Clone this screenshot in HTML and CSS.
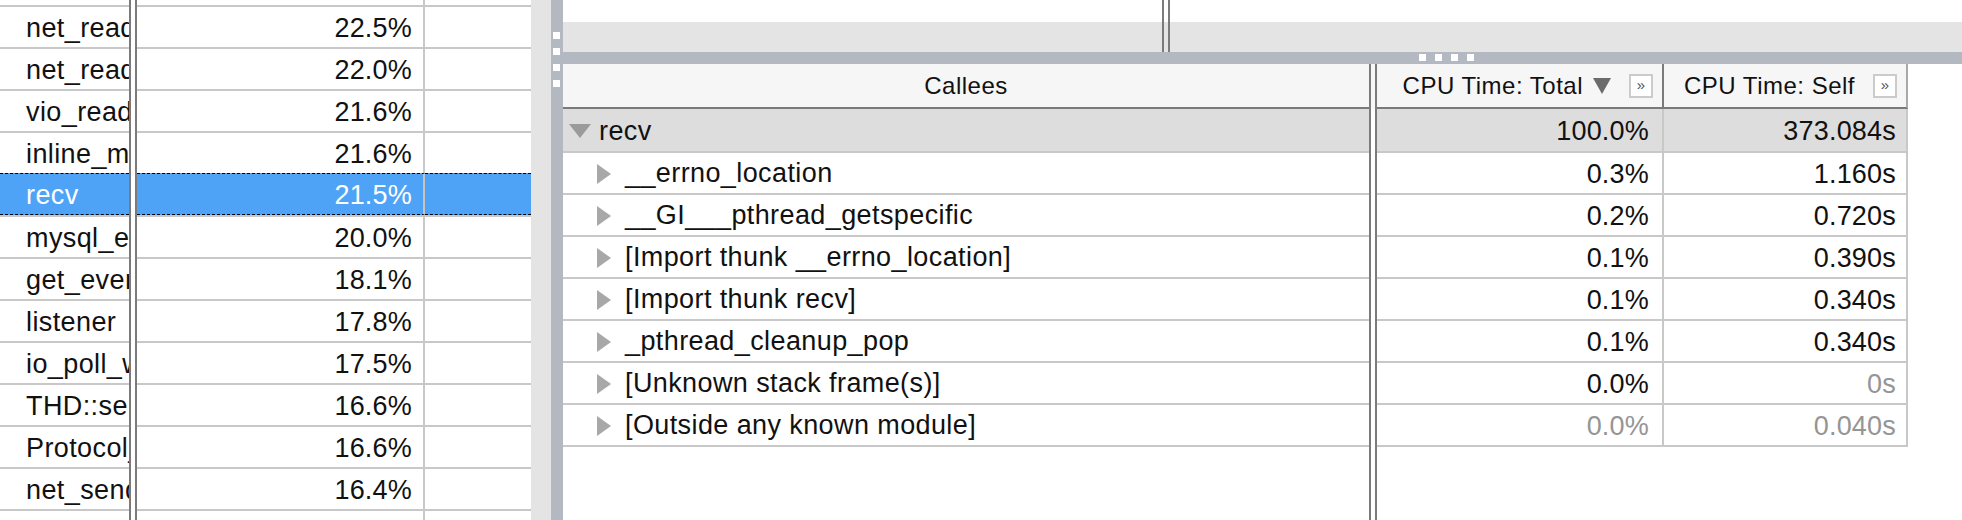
FILE: index.html
```html
<!DOCTYPE html>
<html>
<head>
<meta charset="utf-8">
<link rel="stylesheet" href="styles.css">
</head>
<body>
<div class="app">
  <section class="left">
    <div class="lrow top"><div class="c-name"></div><div class="c-dbl"></div><div class="c-pct"></div><div class="c-rest"></div></div>
    <div class="lrow"><div class="c-name">net_read_raw_loop</div><div class="c-dbl"></div><div class="c-pct">22.5%</div><div class="c-rest"></div></div>
    <div class="lrow"><div class="c-name">net_read_packet</div><div class="c-dbl"></div><div class="c-pct">22.0%</div><div class="c-rest"></div></div>
    <div class="lrow"><div class="c-name">vio_read</div><div class="c-dbl"></div><div class="c-pct">21.6%</div><div class="c-rest"></div></div>
    <div class="lrow"><div class="c-name">inline_mysql_socket_recv</div><div class="c-dbl"></div><div class="c-pct">21.6%</div><div class="c-rest"></div></div>
    <div class="lrow sel"><div class="c-name">recv</div><div class="c-dbl"></div><div class="c-pct">21.5%</div><div class="c-rest"></div></div>
    <div class="lrow"><div class="c-name">mysql_execute_command</div><div class="c-dbl"></div><div class="c-pct">20.0%</div><div class="c-rest"></div></div>
    <div class="lrow"><div class="c-name">get_event</div><div class="c-dbl"></div><div class="c-pct">18.1%</div><div class="c-rest"></div></div>
    <div class="lrow"><div class="c-name">listener</div><div class="c-dbl"></div><div class="c-pct">17.8%</div><div class="c-rest"></div></div>
    <div class="lrow"><div class="c-name">io_poll_wait</div><div class="c-dbl"></div><div class="c-pct">17.5%</div><div class="c-rest"></div></div>
    <div class="lrow"><div class="c-name">THD::send_result</div><div class="c-dbl"></div><div class="c-pct">16.6%</div><div class="c-rest"></div></div>
    <div class="lrow"><div class="c-name">Protocol_classic::read_packet</div><div class="c-dbl"></div><div class="c-pct">16.6%</div><div class="c-rest"></div></div>
    <div class="lrow"><div class="c-name">net_send_ok</div><div class="c-dbl"></div><div class="c-pct">16.4%</div><div class="c-rest"></div></div>
    <div class="lrow bottom"><div class="c-name"></div><div class="c-dbl"></div><div class="c-pct"></div><div class="c-rest"></div></div>
  </section>

  <div class="vtrack"></div>
  <div class="vsplit">
    <span class="grip"></span><span class="grip"></span><span class="grip"></span><span class="grip"></span>
  </div>

  <section class="right">
    <div class="upper"><div class="dbl-line"></div></div>
    <div class="hsplit">
      <span class="grip"></span><span class="grip"></span><span class="grip"></span><span class="grip"></span>
    </div>

    <div class="rrow head">
      <div class="r-name">Callees</div>
      <div class="c-dbl"></div>
      <div class="r-total">
        <span class="hlabel">CPU Time: Total</span>
        <svg class="sort" width="18" height="16" viewBox="0 0 18 16"><polygon points="0,0 18,0 9,16" fill="#6b6b6b"/></svg>
        <span class="more">»</span>
      </div>
      <div class="r-self">
        <span class="hlabel">CPU Time: Self</span>
        <span class="more">»</span>
      </div>
      <div class="r-rest"></div>
    </div>

    <div class="rrow root">
      <div class="r-name"><span class="tw"><svg width="22" height="14" viewBox="0 0 22 14"><polygon points="0,0 22,0 11,14" fill="#9b9b9b"/></svg></span>recv</div>
      <div class="c-dbl"></div>
      <div class="r-total">100.0%</div>
      <div class="r-self">373.084s</div>
      <div class="r-rest"></div>
    </div>

    <div class="rrow child">
      <div class="r-name"><span class="tw"><svg width="14" height="20" viewBox="0 0 14 20"><polygon points="0,0 14,10 0,20" fill="#a8a8a8"/></svg></span>__errno_location</div>
      <div class="c-dbl"></div>
      <div class="r-total">0.3%</div>
      <div class="r-self">1.160s</div>
      <div class="r-rest"></div>
    </div>
    <div class="rrow child">
      <div class="r-name"><span class="tw"><svg width="14" height="20" viewBox="0 0 14 20"><polygon points="0,0 14,10 0,20" fill="#a8a8a8"/></svg></span>__GI___pthread_getspecific</div>
      <div class="c-dbl"></div>
      <div class="r-total">0.2%</div>
      <div class="r-self">0.720s</div>
      <div class="r-rest"></div>
    </div>
    <div class="rrow child">
      <div class="r-name"><span class="tw"><svg width="14" height="20" viewBox="0 0 14 20"><polygon points="0,0 14,10 0,20" fill="#a8a8a8"/></svg></span>[Import thunk __errno_location]</div>
      <div class="c-dbl"></div>
      <div class="r-total">0.1%</div>
      <div class="r-self">0.390s</div>
      <div class="r-rest"></div>
    </div>
    <div class="rrow child">
      <div class="r-name"><span class="tw"><svg width="14" height="20" viewBox="0 0 14 20"><polygon points="0,0 14,10 0,20" fill="#a8a8a8"/></svg></span>[Import thunk recv]</div>
      <div class="c-dbl"></div>
      <div class="r-total">0.1%</div>
      <div class="r-self">0.340s</div>
      <div class="r-rest"></div>
    </div>
    <div class="rrow child">
      <div class="r-name"><span class="tw"><svg width="14" height="20" viewBox="0 0 14 20"><polygon points="0,0 14,10 0,20" fill="#a8a8a8"/></svg></span>_pthread_cleanup_pop</div>
      <div class="c-dbl"></div>
      <div class="r-total">0.1%</div>
      <div class="r-self">0.340s</div>
      <div class="r-rest"></div>
    </div>
    <div class="rrow child">
      <div class="r-name"><span class="tw"><svg width="14" height="20" viewBox="0 0 14 20"><polygon points="0,0 14,10 0,20" fill="#a8a8a8"/></svg></span>[Unknown stack frame(s)]</div>
      <div class="c-dbl"></div>
      <div class="r-total">0.0%</div>
      <div class="r-self dim">0s</div>
      <div class="r-rest"></div>
    </div>
    <div class="rrow child">
      <div class="r-name"><span class="tw"><svg width="14" height="20" viewBox="0 0 14 20"><polygon points="0,0 14,10 0,20" fill="#a8a8a8"/></svg></span>[Outside any known module]</div>
      <div class="c-dbl"></div>
      <div class="r-total dim">0.0%</div>
      <div class="r-self dim">0.040s</div>
      <div class="r-rest"></div>
    </div>
    <div class="rrow filler">
      <div class="f-name"></div>
      <div class="c-dbl"></div>
      <div class="r-rest"></div>
    </div>
  </section>
</div>
</body>
</html>
```

FILE: styles.css
```css
html, body {
  margin: 0;
  padding: 0;
  background: #fff;
}
body {
  font-family: "Liberation Sans", Arial, Helvetica, sans-serif;
  color: #111;
}
.app {
  display: flex;
  width: 1962px;
  height: 520px;
  overflow: hidden;
}

/* ---------- left pane ---------- */
.left {
  width: 531px;
  flex: none;
  display: flex;
  flex-direction: column;
  font-size: 27px;
  letter-spacing: 0.4px;
}
.lrow {
  display: flex;
  height: 42px;
  flex: none;
}
.lrow > div {
  box-sizing: border-box;
  line-height: 40px;
  padding-top: 1px;
}
.lrow > .c-name {
  width: 129px;
  flex: none;
  border-top: 2px solid #c8c8c8;
  padding-left: 26px;
  overflow: hidden;
  white-space: nowrap;
}
.c-dbl {
  width: 8px;
  flex: none;
  box-sizing: border-box;
  border-left: 2px solid #7b7b7b;
  border-right: 2px solid #7b7b7b;
  background: #fff;
}
.lrow > .c-pct {
  width: 288px;
  flex: none;
  border-top: 2px solid #c8c8c8;
  border-right: 2px solid #c8c8c8;
  padding-right: 11px;
  text-align: right;
  letter-spacing: 0.2px;
}
.lrow > .c-rest {
  flex: 1;
  border-top: 2px solid #c8c8c8;
}
.lrow.top {
  height: 5px;
}
.lrow.top > div {
  border-top: 0;
}
.lrow.bottom {
  flex: 1;
}
.lrow.sel > .c-name,
.lrow.sel > .c-pct,
.lrow.sel > .c-rest {
  background: #4fa3f7;
  color: #fff;
  border-top: 1px dashed #000;
  border-bottom: 1px dashed #000;
}
.lrow.sel > .c-pct {
  border-right-color: #c9c4bd;
}

/* ---------- splitter between panes ---------- */
.vtrack {
  width: 20px;
  flex: none;
  background: #e4e4e4;
}
.vsplit {
  width: 12px;
  flex: none;
  background: #b4b8c1;
  display: flex;
  flex-direction: column;
  gap: 9px;
  padding-top: 32px;
  box-sizing: border-box;
}
.grip {
  display: block;
  width: 7px;
  height: 7px;
  background: #fff;
  flex: none;
}
.vsplit .grip {
  margin-left: 2px;
}

/* ---------- right pane ---------- */
.right {
  flex: 1;
  display: flex;
  flex-direction: column;
  min-width: 0;
}
.upper {
  height: 52px;
  flex: none;
  background: linear-gradient(#fff 0 22px, #e4e4e4 22px 52px);
  padding-left: 599px;
  display: flex;
}
.dbl-line {
  width: 8px;
  box-sizing: border-box;
  border-left: 2px solid #7b7b7b;
  border-right: 2px solid #7b7b7b;
}
.hsplit {
  height: 12px;
  flex: none;
  background: #b4b8c1;
  display: flex;
  gap: 9px;
  padding: 2px 0 0 856px;
  box-sizing: border-box;
}

.rrow {
  display: flex;
  flex: none;
  font-size: 27px;
}
.rrow > div {
  box-sizing: border-box;
}
.r-name {
  width: 806px;
  flex: none;
  display: flex;
  align-items: center;
  white-space: nowrap;
  overflow: hidden;
  border-bottom: 2px solid #c8c8c8;
  letter-spacing: 0.4px;
}
.r-total {
  width: 287px;
  flex: none;
  border-bottom: 2px solid #c8c8c8;
  border-right: 2px solid #c8c8c8;
  text-align: right;
  padding-right: 13px;
  letter-spacing: 0.2px;
}
.r-self {
  width: 244px;
  flex: none;
  border-bottom: 2px solid #c8c8c8;
  border-right: 2px solid #c8c8c8;
  text-align: right;
  padding-right: 10px;
  letter-spacing: 0.2px;
}
.r-rest {
  flex: 1;
}
.dim {
  color: #959595;
}

/* header */
.rrow.head {
  height: 45px;
  font-size: 24px;
  letter-spacing: 0.5px;
}
.rrow.head > .r-name,
.rrow.head > .r-total,
.rrow.head > .r-self {
  background: #f6f6f6;
  border-bottom: 2px solid #7a7a7a;
  letter-spacing: 0.5px;
}
.rrow.head > .c-dbl {
  background: #f6f6f6;
}
.rrow.head > .r-name {
  justify-content: center;
  padding-top: 1px;
}
.rrow.head > .r-total,
.rrow.head > .r-self {
  display: flex;
  align-items: center;
  justify-content: flex-end;
  padding-right: 9px;
  padding-top: 1px;
}
.rrow.head > .r-total {
  border-right: 2px solid #7a7a7a;
}
.rrow.head > .r-self {
  border-right: 2px solid #a9a9a9;
}
.sort {
  display: block;
  margin-left: 10px;
  flex: none;
}
.more {
  width: 24px;
  height: 24px;
  box-sizing: border-box;
  border: 2px solid #cbcbcb;
  background: #fff;
  margin-left: 18px;
  font-size: 15px;
  line-height: 1;
  color: #555;
  text-align: center;
  padding-top: 1px;
  letter-spacing: 0;
  flex: none;
}

/* body rows */
.rrow.root {
  height: 44px;
}
.rrow.root > .r-name,
.rrow.root > .r-total,
.rrow.root > .r-self {
  background: #dddddd;
  line-height: 42px;
}
.rrow.root > .r-total,
.rrow.root > .r-self {
  padding-top: 2px;
  line-height: 40px;
}
.rrow.root > .r-name {
  padding-left: 6px;
  padding-top: 2px;
}
.rrow.child {
  height: 42px;
}
.rrow.child > .r-total,
.rrow.child > .r-self {
  line-height: 40px;
  padding-top: 1px;
}
.rrow.child > .r-name {
  padding-left: 30px;
  padding-top: 1px;
}
.tw {
  width: 22px;
  display: flex;
  justify-content: center;
  align-items: center;
  margin-right: 8px;
  flex: none;
}
.rrow.child .tw {
  margin-right: 10px;
}
.rrow.filler {
  flex: 1;
}
.f-name {
  width: 806px;
  flex: none;
}
```
